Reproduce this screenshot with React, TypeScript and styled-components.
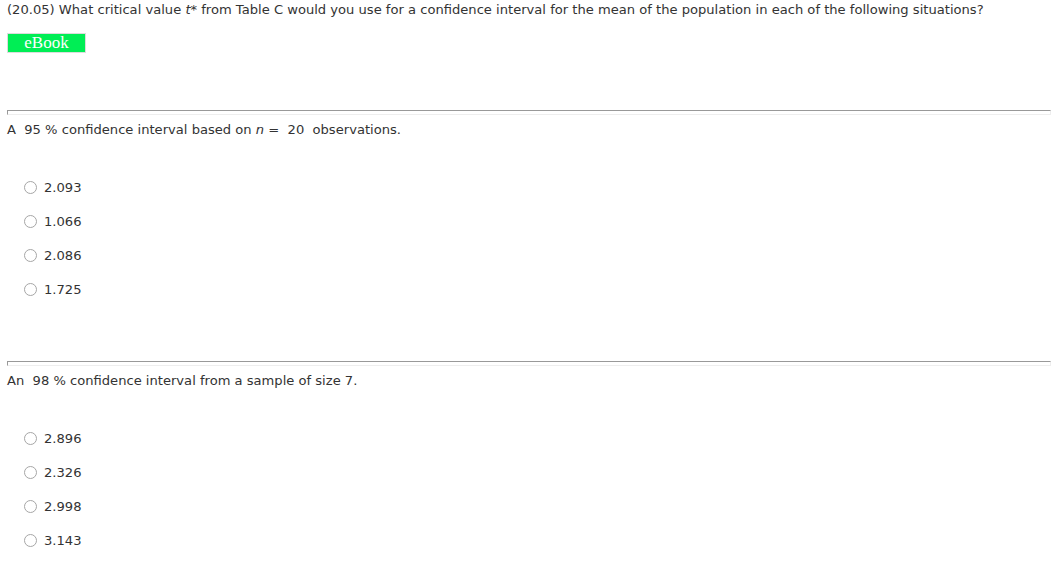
import { createGlobalStyle, styled } from 'styled-components';

const Global = createGlobalStyle`
  html, body {
    margin: 0;
    padding: 0;
    background: #fff;
  }
  body {
    font-family: Verdana, "DejaVu Sans", sans-serif;
    font-size: 13.1px;
    color: #333;
  }
`;

const Page = styled.div`
  padding: 1px 0 0 7px;
`;

const Title = styled.div`
  line-height: 18px;
`;

const EBook = styled.button`
  display: block;
  margin-top: 14px;
  width: 79px;
  height: 20px;
  padding: 0;
  border: 1px solid #dcdcdc;
  background: #00ee55;
  color: #fff;
  font-family: "Liberation Serif", "Times New Roman", serif;
  font-size: 17px;
  line-height: 16px;
  cursor: pointer;
`;

const Rule = styled.div`
  height: 3px;
  border-top: 1px solid #999;
  border-left: 1px solid #999;
  border-bottom: 1px solid #eee;
  border-right: 1px solid #eee;
`;

const Part = styled.section<{ $top: number }>`
  margin-top: ${(p) => p.$top}px;
`;

const Prompt = styled.div`
  margin-top: 6px;
  line-height: 18px;
`;

const Options = styled.div`
  margin-top: 39px;
  padding-left: 17px;
  display: flex;
  flex-direction: column;
  gap: 16px;
`;

const Option = styled.label`
  display: flex;
  align-items: center;
  gap: 7px;
  height: 18px;
`;

const Radio = styled.span`
  width: 13px;
  height: 13px;
  border: 1px solid #a6a6a6;
  border-radius: 50%;
  box-sizing: border-box;
  background: #fff;
  flex: none;
`;

const parts = [
  {
    top: 57,
    prompt: (
      <>
        A &nbsp;95 % confidence interval based on <i>n</i> = &nbsp;20 &nbsp;observations.
      </>
    ),
    options: ['2.093', '1.066', '2.086', '1.725'],
  },
  {
    top: 63,
    prompt: <>An &nbsp;98 % confidence interval from a sample of size 7.</>,
    options: ['2.896', '2.326', '2.998', '3.143'],
  },
];

export default function App() {
  return (
    <Page>
      <Global />
      <Title>
        (20.05) What critical value <i>t</i>* from Table C would you use for a confidence
        interval for the mean of the population in each of the following situations?
      </Title>
      <EBook>eBook</EBook>
      {parts.map((part, i) => (
        <Part key={i} $top={part.top}>
          <Rule />
          <Prompt>{part.prompt}</Prompt>
          <Options>
            {part.options.map((o) => (
              <Option key={o}>
                <Radio />
                {o}
              </Option>
            ))}
          </Options>
        </Part>
      ))}
    </Page>
  );
}
